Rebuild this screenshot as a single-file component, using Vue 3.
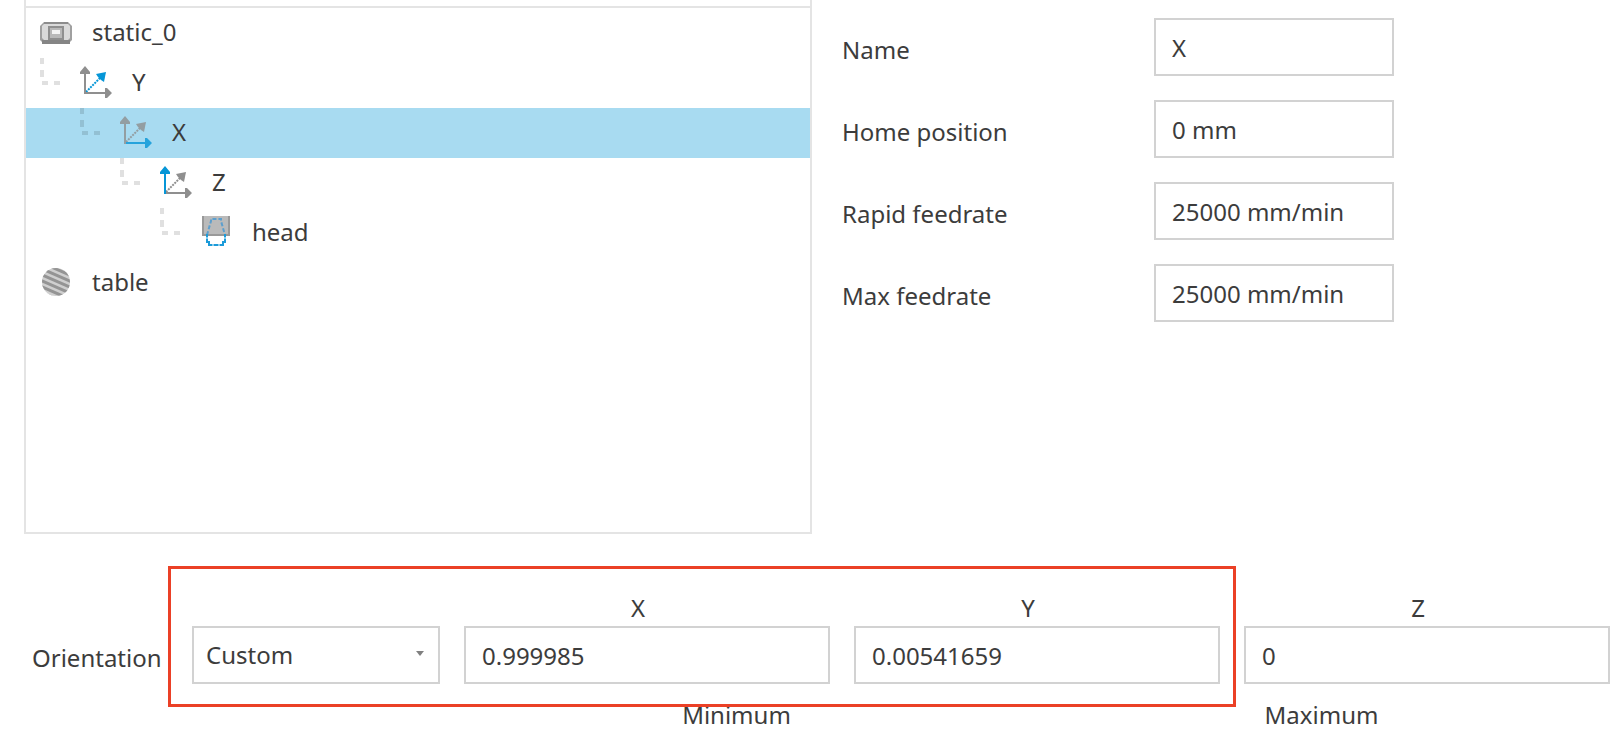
<script setup>
import { reactive, ref } from 'vue'

const nodes = [
  { name: 'static_0', icon: 'static', depth: 0 },
  { name: 'Y', icon: 'axis', axis: 'y', depth: 1 },
  { name: 'X', icon: 'axis', axis: 'x', depth: 2 },
  { name: 'Z', icon: 'axis', axis: 'z', depth: 3 },
  { name: 'head', icon: 'head', depth: 4 },
  { name: 'table', icon: 'table', depth: 0 }
]

const selected = ref('X')

const fields = reactive([
  { id: 'name', label: 'Name', value: 'X' },
  { id: 'home', label: 'Home position', value: '0 mm' },
  { id: 'rapid', label: 'Rapid feedrate', value: '25000 mm/min' },
  { id: 'max', label: 'Max feedrate', value: '25000 mm/min' }
])

const orientation = ref('Custom')

const vector = reactive([
  { id: 'vx', label: 'X', value: '0.999985' },
  { id: 'vy', label: 'Y', value: '0.00541659' },
  { id: 'vz', label: 'Z', value: '0' }
])

const axisColor = (node, axis) => (node.axis === axis ? '#0696d7' : '#8f8f8f')
</script>

<template>
  <main class="machine-editor">
    <section class="top">
      <div class="tree-panel">
        <div class="tree-header"></div>
        <ul class="tree" role="tree">
          <li
            v-for="node in nodes"
            :key="node.name"
            class="node"
            :class="{ selected: node.name === selected }"
            :style="{ paddingLeft: `${14 + Math.max(node.depth - 1, 0) * 40}px` }"
            role="treeitem"
            :aria-selected="node.name === selected"
            @click="selected = node.name"
          >
            <svg v-if="node.depth" class="connector" viewBox="0 0 40 48">
              <path d="M0 0h4v6h-4zM0 12h4v7h-4zM2 23h6v4h-6zM14 23h6v4h-6z" fill="#000" fill-opacity="0.12" />
            </svg>

            <!-- Machine base -->
            <svg v-if="node.icon === 'static'" class="icon" viewBox="0 0 32 32">
              <path d="M4 6h24l4 4v14l-2 2H2l-2-2V10z" fill="#a0a0a0" />
              <path d="M4 6h24v2H4z" fill="#8c8c8c" />
              <path d="M4 8h24l2 2v12l-2 2H4l-2-2V10z" fill="#dadada" />
              <path d="M2 24h28v4H2z" fill="#858585" />
              <path d="M8 10h16v14H8z" fill="#8f8f8f" />
              <path d="M10 12h12v10H10z" fill="#b9b9b9" />
              <path d="M12 14h8v4h-8z" fill="#f4f4f4" />
            </svg>

            <!-- Linear axis, the active direction is blue -->
            <svg v-else-if="node.icon === 'axis'" class="icon" viewBox="0 0 32 32">
              <g :fill="axisColor(node, 'y')">
                <path d="M26 6l-10 2l2 3l3 3l3 2z" />
                <path
                  d="M6 26L21 11"
                  :stroke="axisColor(node, 'y')"
                  stroke-width="2"
                  stroke-dasharray="2 1"
                />
              </g>
              <path d="M4 26h21v-4h2l5 5l-5 5h-2v-4H4z" :fill="axisColor(node, 'x')" />
              <path d="M4 28V8H0V6l5-6l5 6v2H6v20z" :fill="axisColor(node, 'z')" />
            </svg>

            <!-- Tool head -->
            <svg v-else-if="node.icon === 'head'" class="icon" viewBox="0 0 32 32">
              <path d="M2 0h28v20H2z" fill="#999" />
              <path d="M4 0h24v18H4z" fill="#bababa" />
              <path
                d="M7 19L11 5V3H21V5L25 19"
                fill="none"
                stroke="#5c9fce"
                stroke-width="2"
                stroke-dasharray="4 2"
              />
              <path d="M7 18v8h2v3h14v-3h2v-8" fill="none" stroke="#1c9bd9" stroke-width="2" />
              <path d="M6 22h2M24 22h2M12 29h2M18 29h2" stroke="#8accec" stroke-width="2" />
            </svg>

            <!-- Work table -->
            <svg v-else class="icon" viewBox="0 0 32 32">
              <defs>
                <clipPath id="table-disc">
                  <circle cx="16" cy="16" r="14" />
                </clipPath>
              </defs>
              <g clip-path="url(#table-disc)">
                <path d="M0 0h32v32H0z" fill="#cfcfcf" />
                <path
                  d="M0-10L32 4M0-4L32 10M0 2L32 16M0 8L32 22M0 14L32 28M0 20L32 34M0 26L32 40"
                  stroke="#949494"
                  stroke-width="3"
                />
              </g>
            </svg>

            <span class="node-name">{{ node.name }}</span>
          </li>
        </ul>
      </div>

      <form class="properties" @submit.prevent>
        <template v-for="field in fields" :key="field.id">
          <label class="label" :for="field.id">{{ field.label }}</label>
          <input :id="field.id" v-model="field.value" class="box" type="text" />
        </template>
      </form>
    </section>

    <section class="orientation">
      <label class="label orientation-label" for="orientation">Orientation</label>
      <div class="select-wrap">
        <select id="orientation" v-model="orientation" class="box">
          <option>Custom</option>
        </select>
        <svg class="caret" viewBox="0 0 8 5">
          <path d="M0 0h8L4 5z" fill="#808080" />
        </svg>
      </div>
      <div v-for="part in vector" :key="part.id" class="component" :class="part.id">
        <label class="component-label" :for="part.id">{{ part.label }}</label>
        <input :id="part.id" v-model="part.value" class="box" type="text" />
      </div>
      <div class="highlight"></div>
    </section>

    <section class="range">
      <span>Minimum</span>
      <span>Maximum</span>
    </section>
  </main>
</template>

<style>
body {
  background: #fff;
}
</style>

<style scoped>
.machine-editor {
  font-family: 'Noto Sans', sans-serif;
  font-size: 24px;
  line-height: 32px;
  color: #3c3c3c;
}

.top {
  display: grid;
  grid-template-columns: 788fr 756fr;
  gap: 30px;
  padding: 0 24px;
}

/* Tree */
.tree-panel {
  border: 2px solid #e4e4e4;
  border-top: 0;
}

.tree-header {
  height: 6px;
  border-bottom: 2px solid #e4e4e4;
}

.tree {
  min-height: 524px;
  margin: 0;
  padding: 0;
  list-style: none;
}

.node {
  display: flex;
  align-items: center;
  box-sizing: border-box;
  height: 50px;
  padding-bottom: 2px;
  cursor: default;
}

.node.selected {
  background: #a8dbf1;
}

.node.selected .icon {
  opacity: 0.8;
}

.connector {
  flex: none;
  width: 40px;
  height: 48px;
}

.icon {
  flex: none;
  width: 32px;
  height: 32px;
  margin-right: 20px;
}

/* Properties */
.properties {
  display: grid;
  grid-template-columns: 312px 240px;
  align-content: start;
  align-items: center;
  row-gap: 24px;
  padding-top: 18px;
}

.label {
  padding-top: 6px;
}

.box {
  display: block;
  box-sizing: border-box;
  width: 100%;
  height: 58px;
  margin: 0;
  padding: 0 16px;
  border: 2px solid #d2d2d2;
  border-radius: 0;
  background: #fff;
  color: inherit;
  font: inherit;
  outline: none;
  appearance: none;
}

/* Orientation */
.orientation {
  display: grid;
  grid-template-columns: 136px 248px repeat(3, 1fr);
  grid-template-rows: 60px 58px;
  column-gap: 24px;
  margin-top: 32px;
  padding: 0 12px 0 32px;
}

.orientation-label {
  grid-area: 2 / 1;
  align-self: center;
}

.select-wrap {
  grid-area: 2 / 2;
  position: relative;
}

.select-wrap .box {
  padding-left: 12px;
}

.caret {
  position: absolute;
  top: 25px;
  right: 16px;
  width: 8px;
  height: 5px;
  pointer-events: none;
}

.component {
  grid-row: 1 / 3;
  display: flex;
  flex-direction: column;
  justify-content: flex-end;
}

.vx {
  grid-column: 3;
}

.vy {
  grid-column: 4;
}

.vz {
  grid-column: 5;
}

.component-label {
  padding: 0 18px 2px 0;
  text-align: center;
}

/* Frame around the custom direction, spills over the gaps */
.highlight {
  grid-area: 1 / 2 / 3 / 5;
  z-index: 1;
  margin: 0 -16px -23px -24px;
  border: 3px solid #eb4026;
  pointer-events: none;
}

.range {
  display: grid;
  grid-template-columns: 1fr 1fr;
  margin-top: 15px;
  padding: 0 8px 0 444px;
  text-align: center;
}
</style>
